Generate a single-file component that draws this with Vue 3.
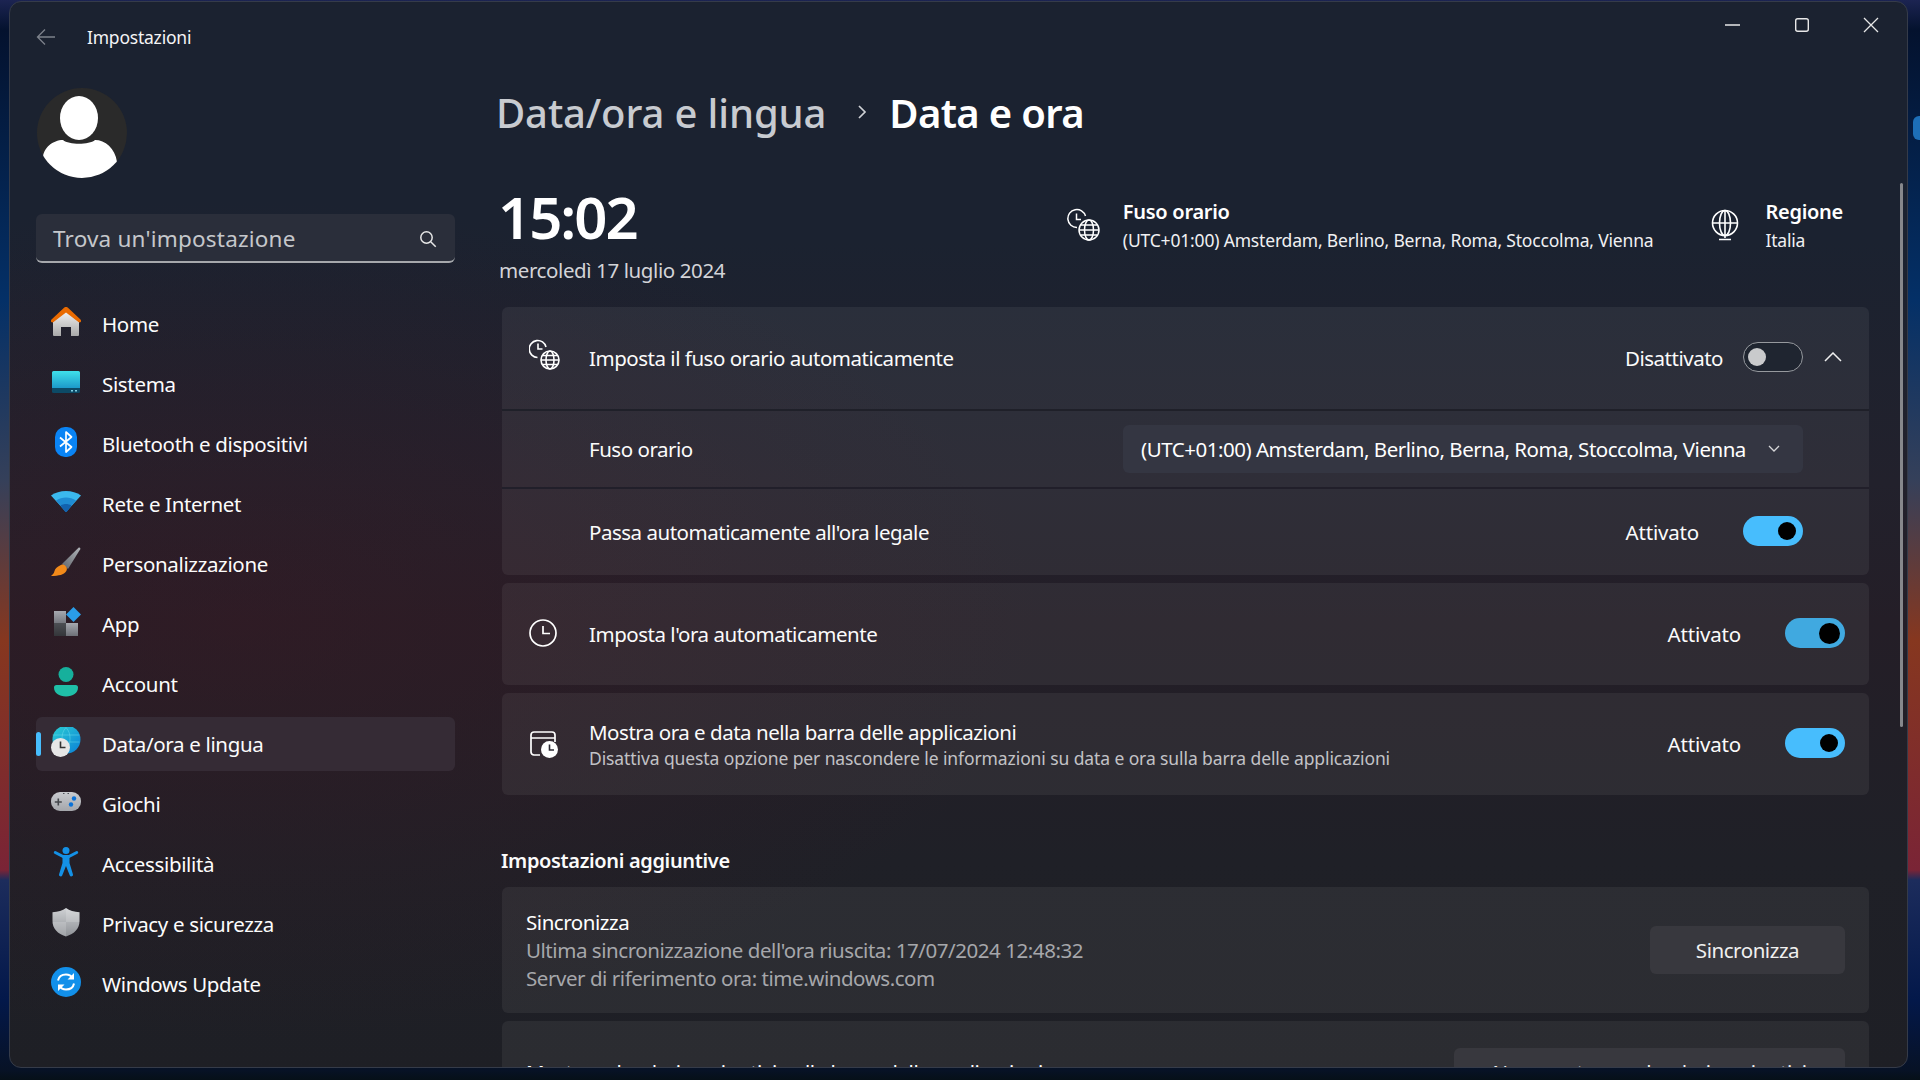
<script setup>
const nav = [
  { id: 'home', label: 'Home' },
  { id: 'system', label: 'Sistema' },
  { id: 'bt', label: 'Bluetooth e dispositivi' },
  { id: 'wifi', label: 'Rete e Internet' },
  { id: 'brush', label: 'Personalizzazione' },
  { id: 'apps', label: 'App' },
  { id: 'account', label: 'Account' },
  { id: 'time', label: 'Data/ora e lingua', active: true },
  { id: 'games', label: 'Giochi' },
  { id: 'access', label: 'Accessibilità' },
  { id: 'privacy', label: 'Privacy e sicurezza' },
  { id: 'update', label: 'Windows Update' }
]
</script>

<template>
  <div class="desktop">
    <div class="window">
      <header class="titlebar">
        <svg class="back" width="20" height="18" viewBox="0 0 20 18" fill="none" stroke="#7d828b" stroke-width="1.3"><path d="M19 9H1.5M9 1.5 1.5 9 9 16.5"/></svg>
        <span class="app-title">Impostazioni</span>
        <div class="controls">
          <svg width="18" height="18" viewBox="0 0 18 18" stroke="#e8e8e8" stroke-width="1.4"><path d="M1 9h15"/></svg>
          <svg width="18" height="18" viewBox="0 0 18 18" fill="none" stroke="#e8e8e8" stroke-width="1.4"><rect x="2.7" y="2.7" width="12.6" height="12.6" rx="2"/></svg>
          <svg width="18" height="18" viewBox="0 0 18 18" stroke="#e8e8e8" stroke-width="1.3"><path d="M2 2l14 14M16 2 2 16"/></svg>
        </div>
      </header>

      <div class="body">
        <aside class="sidebar">
          <svg class="avatar" width="90" height="90" viewBox="0 0 90 90">
            <defs><clipPath id="avc"><circle cx="45" cy="45" r="45"/></clipPath></defs>
            <circle cx="45" cy="45" r="45" fill="#2a2a2a"/>
            <g clip-path="url(#avc)" fill="#fff">
              <ellipse cx="42" cy="30" rx="19" ry="22"/>
              <path d="M6 90V70C6 60 16 52 26 52c6 5 26 5 32 0 10 0 20 8 22 22v16z"/>
            </g>
          </svg>
          <div class="search">
            <span>Trova un'impostazione</span>
            <svg width="18" height="18" viewBox="0 0 18 18" fill="none" stroke="#e6e6e6" stroke-width="1.5"><circle cx="7.5" cy="7.5" r="5.7"/><path d="m11.7 11.7 5 5"/></svg>
          </div>
          <nav class="nav">
            <div v-for="item in nav" :key="item.id" class="nav-item" :class="{ active: item.active }">
              <span class="nav-icon">
                <svg v-if="item.id === 'home'" width="30" height="30" viewBox="0 0 30 30">
                  <defs><linearGradient id="hw" x1="0" y1="0" x2="0" y2="1"><stop offset="0" stop-color="#f2f2f2"/><stop offset="1" stop-color="#a9a9a9"/></linearGradient></defs>
                  <path d="M2 15 15 4l13 11v13a1 1 0 0 1-1 1h-7v-9h-10v9H3a1 1 0 0 1-1-1z" fill="url(#hw)"/>
                  <path d="M15 0c-1 0-1.500.4-2.200 1L.5 12.600c-.8.8-.7 1.700-.2 2.300.6.700 1.500.6 2.200 0L15 5.500l12.500 9.400c.7.600 1.600.7 2.200 0 .5-.6.600-1.500-.2-2.300L17.200 1C16.500.4 16 0 15 0z" fill="#e96a00"/>
                </svg>
                <svg v-else-if="item.id === 'system'" width="30" height="30" viewBox="0 0 30 30">
                  <defs><linearGradient id="sy" x1="0" y1="0" x2="0" y2="1"><stop offset="0" stop-color="#3fe0ea"/><stop offset="1" stop-color="#1a96c8"/></linearGradient></defs>
                  <path d="M1.500 4h25a1.500 1.500 0 0 1 1.500 1.500V22H0V5.500A1.500 1.500 0 0 1 1.500 4z" transform="translate(1)" fill="url(#sy)"/>
                  <path d="M1 21h28v3.500a1.500 1.500 0 0 1-1.500 1.500h-25A1.500 1.500 0 0 1 1 24.500z" fill="#0c4a66"/>
                  <path d="M20 23h2v1.500h-2zM24 23h2v1.500h-2z" fill="#7fd0e6"/>
                </svg>
                <svg v-else-if="item.id === 'bt'" width="30" height="30" viewBox="0 0 30 30">
                  <rect x="4" y="0" width="22" height="30" rx="10" fill="#0a84f5"/>
                  <path d="M9 10.500 20.500 20 15 25V5l5.500 5L9 19.500" fill="none" stroke="#fff" stroke-width="1.700" stroke-linejoin="round"/>
                </svg>
                <svg v-else-if="item.id === 'wifi'" width="30" height="30" viewBox="0 0 30 30">
                  <path d="M0 8.500C4 5.500 9.500 4 15 4s11 1.500 15 4.500L15 25z" fill="#3bb9ee"/>
                  <path d="M5 13.500C8 11.500 11.500 10.500 15 10.500s7 1 10 3L15 25z" fill="#1f8cd3"/>
                  <path d="M9.500 18.500c1.500-1 3.500-1.500 5.500-1.500s4 .5 5.500 1.500L16 24.500c-.5.700-1.500.700-2 0z" fill="#1262ae"/>
                </svg>
                <svg v-else-if="item.id === 'brush'" width="30" height="30" viewBox="0 0 30 30">
                  <defs><linearGradient id="br" x1="0" y1="1" x2="1" y2="0"><stop offset="0" stop-color="#5f646b"/><stop offset="1" stop-color="#b0b3b8"/></linearGradient></defs>
                  <path d="M11 17 27.500 .8c1-.8 2.300.2 1.700 1.400L17 22z" fill="url(#br)"/>
                  <path d="M9 18.500c2-1.500 4-1 5.500.5s2 3.500 .5 5.500C13 27.500 8 29 0 29c2-1.500 3-3 3.500-5 .6-2.500 3-4.500 5.500-5.500z" fill="#f28a1a"/>
                </svg>
                <svg v-else-if="item.id === 'apps'" width="30" height="30" viewBox="0 0 30 30">
                  <defs><linearGradient id="ap" x1="0" y1="0" x2="0" y2="1"><stop offset="0" stop-color="#a6a9b0"/><stop offset="1" stop-color="#6d7077"/></linearGradient><linearGradient id="ap2" x1="0" y1="0" x2="0" y2="1"><stop offset="0" stop-color="#4c4f54"/><stop offset="1" stop-color="#34363a"/></linearGradient></defs>
                  <path d="M3 4h12v14H3z" fill="url(#ap)"/>
                  <rect x="3" y="16" width="12" height="13" fill="url(#ap2)"/>
                  <rect x="15" y="16" width="12" height="13" fill="url(#ap)"/>
                  <path d="M22.500 0 30 7.500 22.500 15 15 7.500z" fill="#2a9de8"/>
                </svg>
                <svg v-else-if="item.id === 'account'" width="30" height="30" viewBox="0 0 30 30">
                  <circle cx="15" cy="7.500" r="7.500" fill="#16b09c"/>
                  <path d="M3 20.500A2.500 2.500 0 0 1 5.500 18h19a2.500 2.500 0 0 1 2.500 2.500c0 5.500-5 9-12 9s-12-3.500-12-9z" fill="#1fc0a8"/>
                </svg>
                <svg v-else-if="item.id === 'time'" width="30" height="30" viewBox="0 0 30 30">
                  <defs><linearGradient id="gl" x1="0" y1="0" x2="1" y2="1"><stop offset="0" stop-color="#2cd0d2"/><stop offset="1" stop-color="#0a7fd8"/></linearGradient></defs>
                  <circle cx="15.500" cy="12.500" r="14" fill="url(#gl)"/>
                  <path d="M15 .5c-3 3-4 7-4 11s1 8 4 11M15 .5c3 3 4 7 4 11s-1 8-4 11M1.500 8h27M1.500 15h27" fill="none" stroke="#75e0ee" stroke-opacity=".55" stroke-width=".8"/>
                  <circle cx="9.500" cy="20.500" r="9.500" fill="#e6e6e6"/>
                  <path d="M9.500 14.500V20.500h5" fill="none" stroke="#333" stroke-width="1.600"/>
                </svg>
                <svg v-else-if="item.id === 'games'" width="30" height="30" viewBox="0 0 30 30">
                  <defs><linearGradient id="gm" x1="0" y1="0" x2="0" y2="1"><stop offset="0" stop-color="#c9cbcf"/><stop offset="1" stop-color="#a4a6ab"/></linearGradient></defs>
                  <rect x="0" y="5" width="30" height="19" rx="9" fill="url(#gm)"/>
                  <path d="M6.500 11.500h1.600v2.700h2.700v1.600H8.100v2.700H6.500v-2.700H3.800v-1.600h2.700z" fill="#44474c"/>
                  <circle cx="23" cy="11.500" r="2.200" fill="#0a72d8"/>
                  <circle cx="20" cy="17.500" r="2.200" fill="#0a72d8"/>
                  <path d="M12 6h1.500v1H12zM16.500 6H18v1h-1.500z" fill="#50535a"/>
                </svg>
                <svg v-else-if="item.id === 'access'" width="30" height="30" viewBox="0 0 30 30">
                  <circle cx="15" cy="3.500" r="3.500" fill="#1491e6"/>
                  <path d="M4.300 5.500 12 9.500h6l7.700-4" fill="none" stroke="#1491e6" stroke-width="3" stroke-linecap="round" stroke-linejoin="round"/>
                  <path d="M11.500 9h7v7l3.500 11.500a1.700 1.700 0 0 1-3.200 1L15 19l-3.800 9.500a1.700 1.700 0 0 1-3.200-1L11.500 16z" fill="#1491e6"/>
                </svg>
                <svg v-else-if="item.id === 'privacy'" width="30" height="30" viewBox="0 0 30 30">
                  <defs><linearGradient id="pv" x1="0" y1="0" x2="0" y2="1"><stop offset="0" stop-color="#cfd1d4"/><stop offset="1" stop-color="#8e9196"/></linearGradient></defs>
                  <path d="M15 1c3.500 2.500 8 4 13.500 4.200V14c0 7.500-5 12.800-13.500 15.500C6.500 26.800 1.500 21.500 1.500 14V5.200C7 5 11.500 3.500 15 1z" fill="url(#pv)"/>
                  <path d="M15 1c3.500 2.500 8 4 13.500 4.200V15H15zM15 15H1.500c.6 6.800 5.500 11.800 13.500 14.500z" fill="#fff" fill-opacity=".16"/>
                </svg>
                <svg v-else width="30" height="30" viewBox="0 0 30 30">
                  <circle cx="15" cy="15" r="15" fill="#1290ea"/>
                  <path d="M7 13.500C7.800 9.500 11 7.500 15 7.500c3 0 5.200 1.300 6.500 3.500M23 16.500c-.8 4-4 6-8 6-3 0-5.200-1.300-6.500-3.500" fill="none" stroke="#fff" stroke-width="2"/>
                  <path d="M23 6v6.500h-6.500zM7 24v-6.500h6.500z" fill="#fff"/>
                </svg>
              </span>
              <span class="nav-label">{{ item.label }}</span>
            </div>
          </nav>
        </aside>

        <main class="main">
          <div class="breadcrumb">
            <span class="crumb">Data/ora e lingua</span>
            <svg class="crumb-sep" width="12" height="16" viewBox="0 0 12 16" fill="none" stroke="#cfd2d6" stroke-width="1.700"><path d="m3 2 6 6-6 6"/></svg>
            <span class="crumb-now">Data e ora</span>
          </div>

          <section class="clockline">
            <div class="clock">
              <div class="time">15:02</div>
              <div class="date">mercoledì 17 luglio 2024</div>
            </div>
            <div class="info tz">
              <svg width="34" height="34" viewBox="0 0 34 34" fill="none" stroke="#fff" stroke-width="1.500">
                <path d="M10 19.500A9 9 0 1 1 18.500 8"/><path d="M9.500 5.500v6h4.500"/>
                <circle cx="22" cy="22" r="10"/><ellipse cx="22" cy="22" rx="4.500" ry="10"/><path d="M12 22h20M13.500 17h17M13.500 27h17"/>
              </svg>
              <div>
                <div class="info-title">Fuso orario</div>
                <div class="info-sub">(UTC+01:00) Amsterdam, Berlino, Berna, Roma, Stoccolma, Vienna</div>
              </div>
            </div>
            <div class="info region">
              <svg width="28" height="32" viewBox="0 0 28 32" fill="none" stroke="#fff" stroke-width="1.600">
                <circle cx="14" cy="14" r="12.500"/><ellipse cx="14" cy="14" rx="5.500" ry="12.500"/><path d="M1.500 14h25M14 1v28M8 30.500h12"/>
              </svg>
              <div>
                <div class="info-title">Regione</div>
                <div class="info-sub">Italia</div>
              </div>
            </div>
          </section>

          <div class="group">
            <div class="row row-a">
              <svg class="row-icon" width="32" height="32" viewBox="0 0 32 32" fill="none" stroke="#fff" stroke-width="1.600">
                <path d="M8.500 18.500A8.500 8.500 0 1 1 17 8"/><path d="M9 4.500V10h4.500"/>
                <circle cx="21" cy="21" r="9"/><ellipse cx="21" cy="21" rx="4" ry="9"/><path d="M12 21h18M13.500 16.500h15M13.500 25.500h15"/>
              </svg>
              <span class="row-label">Imposta il fuso orario automaticamente</span>
              <span class="state">Disattivato</span>
              <span class="switch off"><i></i></span>
              <svg class="chev-up" width="18" height="10" viewBox="0 0 18 10" fill="none" stroke="#f0f0f0" stroke-width="1.500"><path d="m1 9 8-8 8 8"/></svg>
            </div>
            <div class="row row-b">
              <span class="row-label indent">Fuso orario</span>
              <div class="select">
                <span>(UTC+01:00) Amsterdam, Berlino, Berna, Roma, Stoccolma, Vienna</span>
                <svg width="12" height="8" viewBox="0 0 12 8" fill="none" stroke="#d6d6d8" stroke-width="1.300"><path d="m1 1 5 5 5-5"/></svg>
              </div>
            </div>
            <div class="row row-c">
              <span class="row-label indent">Passa automaticamente all'ora legale</span>
              <span class="state short">Attivato</span>
              <span class="switch on"><i></i></span>
            </div>
          </div>

          <div class="card row">
            <svg class="row-icon" width="30" height="30" viewBox="0 0 30 30" fill="none" stroke="#fff" stroke-width="1.700"><circle cx="14" cy="14" r="13"/><path d="M14 7v7.500h7"/></svg>
            <span class="row-label">Imposta l'ora automaticamente</span>
            <span class="state short">Attivato</span>
            <span class="switch on dim"><i></i></span>
          </div>

          <div class="card row">
            <svg class="row-icon" width="30" height="30" viewBox="0 0 30 30" fill="none" stroke="#fff" stroke-width="1.700">
              <path d="M11 26H5a3 3 0 0 1-3-3V6a3 3 0 0 1 3-3h18a3 3 0 0 1 3 3v7M2 9h24"/>
              <circle cx="20.500" cy="20.500" r="8.500" fill="#fff" stroke="none"/><path d="M20.500 15.500V21h4.500" stroke="#2c2a33" stroke-width="1.600"/>
            </svg>
            <div class="row-text">
              <div class="row-label">Mostra ora e data nella barra delle applicazioni</div>
              <div class="row-sub">Disattiva questa opzione per nascondere le informazioni su data e ora sulla barra delle applicazioni</div>
            </div>
            <span class="state short">Attivato</span>
            <span class="switch on"><i></i></span>
          </div>

          <h2 class="section">Impostazioni aggiuntive</h2>

          <div class="card sync">
            <div class="sync-text">
              <div class="sync-title">Sincronizza</div>
              <div class="sync-line">Ultima sincronizzazione dell'ora riuscita: 17/07/2024 12:48:32</div>
              <div class="sync-line">Server di riferimento ora: time.windows.com</div>
            </div>
            <div class="button">Sincronizza</div>
          </div>

          <div class="card calendars">
            <span class="cal-label">Mostra calendari aggiuntivi nella barra delle applicazioni</span>
            <div class="button wide">Non mostrare calendari aggiuntivi</div>
          </div>
        </main>
      </div>
      <div class="scrollbar"></div>
    </div>
    <div class="wall-blob"></div>
  </div>
</template>

<style>
html, body { margin: 0; background: #050f25; }
</style>

<style scoped>
.desktop {
  position: relative;
  width: 1920px;
  height: 1080px;
  overflow: hidden;
  box-sizing: border-box;
  padding: 1px 0 0 9px;
  font-family: "Noto Sans", "Open Sans", sans-serif;
  color: #fff;
  background:
    linear-gradient(180deg, #1c2452 0, #04122e 30px, #043067 300px, #35405a 480px, #86371f 640px, #7a2436 870px, #1c2c5c 880px, #03184a 1000px, #071226 1070px, #061018 1080px);
}
.window {
  position: relative;
  width: 1899px;
  height: 1067px;
  box-sizing: border-box;
  border: 1.5px solid #353b49;
  border-radius: 12px;
  overflow: hidden;
  display: flex;
  flex-direction: column;
  background:
    radial-gradient(800px 420px at 12% 58%, rgba(62, 24, 34, .42), rgba(62, 24, 34, 0) 100%),
    linear-gradient(180deg, #1b2230 0, #1b2230 240px, #22212c 480px, #241e27 620px, #1f2027 860px, #1e1f25 1067px);
}
.wall-blob {
  position: absolute;
  left: 1913px;
  top: 116px;
  width: 12px;
  height: 24px;
  border-radius: 8px;
  background: #1d6fb8;
}
.titlebar {
  flex: none;
  height: 70px;
  display: flex;
  align-items: center;
  padding-left: 26px;
  box-sizing: border-box;
}
.back { margin-right: 31px; }
.app-title { font-size: 17.5px; letter-spacing: -.22px; color: #f4f4f5; }
.controls {
  margin-left: auto;
  margin-top: -24px;
  display: flex;
  gap: 51px;
  padding-right: 27px;
}
.body { flex: 1; display: flex; min-height: 0; }
.sidebar {
  flex: none;
  width: 463px;
  box-sizing: border-box;
  padding: 16px 0 0 26px;
  display: flex;
  flex-direction: column;
}
.avatar { display: block; margin-left: 1px; filter: blur(.4px); }
.search {
  margin-top: 36px;
  width: 419px;
  height: 49px;
  box-sizing: border-box;
  display: flex;
  align-items: center;
  justify-content: space-between;
  padding: 2px 18px 0 17px;
  border-radius: 6px;
  background: #2a2e3a;
  border-bottom: 2px solid #a6a8ac;
  font-size: 22.5px;
  letter-spacing: .2px;
  color: #c5c7cb;
}
.nav {
  margin-top: 34px;
  display: flex;
  flex-direction: column;
  gap: 6px;
  width: 419px;
}
.nav-item {
  position: relative;
  height: 54px;
  display: flex;
  align-items: center;
  border-radius: 6px;
  padding-left: 15px;
  font-size: 20.5px;
  letter-spacing: -.34px;
  color: #fcfcfc;
}
.nav-item.active { background: #352b35; }
.nav-item.active::before {
  content: "";
  position: absolute;
  left: 0;
  top: 15px;
  width: 5px;
  height: 24px;
  border-radius: 3px;
  background: #47bdfd;
}
.nav-icon { width: 30px; height: 30px; margin-right: 21px; display: block; transform: translateY(-2px); }
.nav-icon svg { display: block; }
.main {
  flex: 1;
  min-width: 0;
  padding: 0 38px 0 29px;
  overflow: hidden;
  position: relative;
}
.breadcrumb {
  margin-top: 9px;
  margin-left: -6px;
  height: 62px;
  display: flex;
  align-items: center;
  font-size: 40px;
  font-weight: 600;
}
.crumb { color: #c8cbd0; font-weight: 500; letter-spacing: -.12px; }
.crumb-sep { margin: 0 21px 0 30px; }
.crumb-now { color: #fff; letter-spacing: -.65px; }
.clockline {
  margin-top: 36px;
  height: 128px;
  display: flex;
  position: relative;
}
.clock { margin-left: -4px; }
.time { font-size: 58px; font-weight: 600; line-height: 72px; letter-spacing: -2px; margin-top: 2px; }
.date { font-size: 20.5px; letter-spacing: -.4px; line-height: 26px; margin-top: 4px; margin-left: 1px; color: #d3d4d8; }
.info { display: flex; align-items: center; gap: 22px; height: 60px; margin-top: 16px; }
.tz { margin-left: auto; }
.region { margin-left: 58px; margin-right: 26px; gap: 26px; }
.info-title { font-size: 20px; font-weight: 600; letter-spacing: -.28px; line-height: 28px; margin-top: 1px; }
.info-sub { font-size: 17.5px; letter-spacing: -.18px; line-height: 28px; color: #f0f0f2; }
.group, .card {
  border-radius: 6px;
  background: rgba(255, 255, 255, .058);
}
.group { display: flex; flex-direction: column; gap: 2px; }
.row {
  display: flex;
  align-items: center;
  box-sizing: border-box;
  padding: 0 24px 0 0;
}
.row-a { height: 102px; padding-right: 26px; }
.row-b { height: 76px; box-shadow: 0 -2px 0 #1f2029; }
.row-c { height: 86px; box-shadow: 0 -2px 0 #211f2a; padding-right: 66px; }
.card.row { height: 102px; margin-top: 8px; }
.row-icon { flex: none; margin: 0 30px 0 27px; }
.row-a .row-icon { margin: -6px 28px 0 27px; }
.row-label { font-size: 20.5px; letter-spacing: -.48px; color: #fbfbfb; flex: none; }
.row-label.indent { margin-left: 87px; }
.row-text { line-height: 1; flex: none; }
.row-sub { font-size: 17.5px; letter-spacing: -.1px; line-height: 24px; color: #c2c2c6; margin-top: 1px; }
.row-text .row-label { line-height: 26px; }
.state { margin-left: auto; font-size: 20.5px; letter-spacing: -.48px; color: #fbfbfb; }
.state.short { letter-spacing: -.18px; }
.switch {
  flex: none;
  width: 60px;
  height: 30px;
  border-radius: 15px;
  box-sizing: border-box;
  margin-left: 44px;
  display: flex;
  align-items: center;
  transform: translateY(-1px);
}
.switch i { display: block; border-radius: 50%; }
.switch.on { background: #47bdfd; justify-content: flex-end; padding-right: 7px; }
.switch.on i { width: 18px; height: 18px; background: #000; }
.switch.dim { background: #40a9e0; padding-right: 5px; }
.switch.dim i { width: 21px; height: 21px; }
.switch.off { border: 1.5px solid #96999e; background: #1f2530; padding-left: 4px; }
.switch.off i { width: 18px; height: 18px; background: #c9cacc; }
.chev-up { margin: -2px 1px 0 21px; }
.row-a .switch { margin-left: 20px; }
.select {
  margin-left: auto;
  margin-right: 42px;
  width: 680px;
  height: 48px;
  box-sizing: border-box;
  padding: 0 23px 0 18px;
  display: flex;
  align-items: center;
  justify-content: space-between;
  border-radius: 6px;
  background: #343642;
  font-size: 20.5px;
  letter-spacing: -.48px;
}
.section {
  margin: 50px 0 0 -1px;
  height: 32px;
  line-height: 32px;
  font-size: 20px;
  font-weight: 600;
  letter-spacing: -.35px;
  color: #fbfbfb;
}
.card.sync {
  margin-top: 10px;
  height: 126px;
  display: flex;
  align-items: center;
  justify-content: space-between;
  padding: 0 24px;
  box-sizing: border-box;
}
.sync-title { font-size: 20.5px; letter-spacing: -.45px; line-height: 28px; }
.sync-line { font-size: 20.5px; letter-spacing: -.45px; line-height: 28px; color: #a6a7ab; }
.button {
  height: 48px;
  width: 195px;
  flex: none;
  display: flex;
  align-items: center;
  justify-content: center;
  border-radius: 6px;
  background: #38383e;
  font-size: 20.5px;
  letter-spacing: -.45px;
  color: #f0f0f0;
}
.button.wide { width: 391px; }
.card.calendars {
  margin-top: 8px;
  height: 102px;
  display: flex;
  align-items: center;
  justify-content: space-between;
  padding: 0 24px;
  box-sizing: border-box;
  font-size: 20.5px;
  letter-spacing: -.45px;
}
.scrollbar {
  position: absolute;
  right: 4px;
  top: 181px;
  width: 3px;
  height: 544px;
  border-radius: 2px;
  background: #87888c;
}
</style>
